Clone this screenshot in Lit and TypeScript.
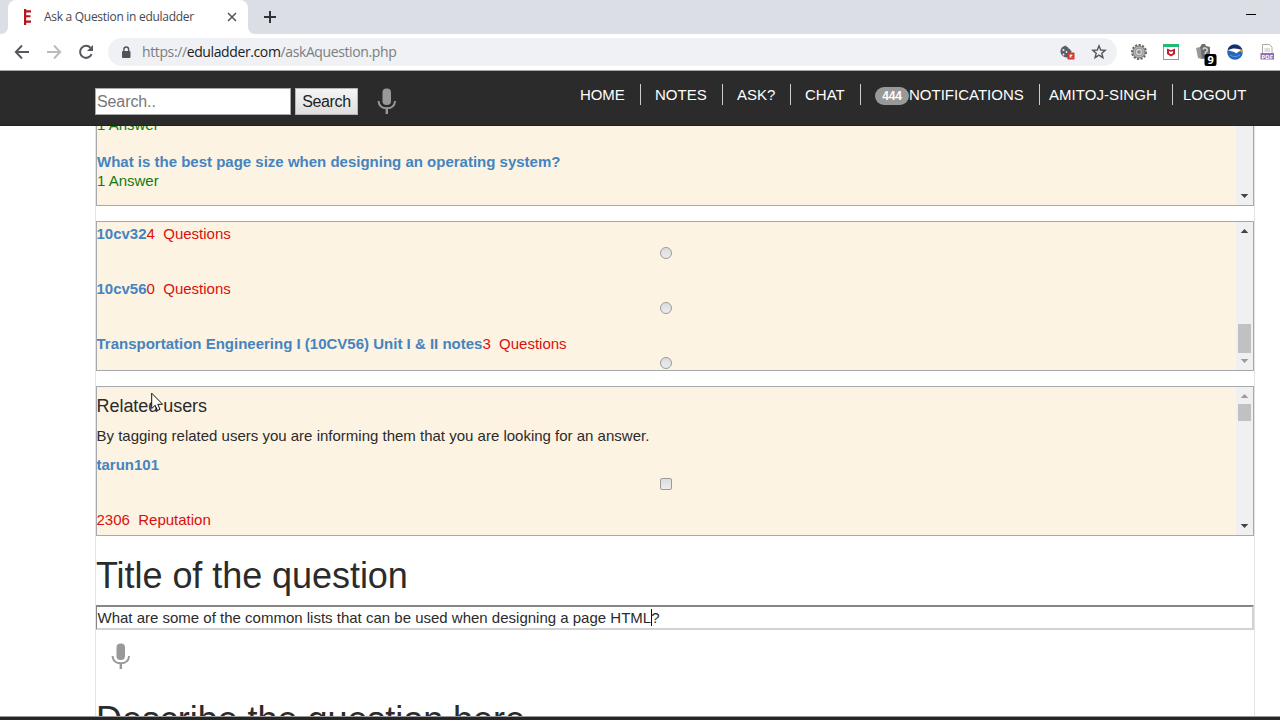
import { LitElement, html, css } from "lit";
import { customElement, property } from "lit/decorators.js";

@customElement("mic-icon")
class MicIcon extends LitElement {
  static styles = css`
    :host { display: block; width: 20px; height: 27px; }
    svg { display: block; }
  `;
  render() {
    return html`<svg width="20" height="27" viewBox="0 0 20 27" fill="none">
      <rect x="5.5" y="0.5" width="8.5" height="16.5" rx="4" fill="#999" />
      <path d="M1.5 13C2 17.8 5 20.3 9.8 20.3S17.6 17.8 18.1 13" stroke="#999" stroke-width="2" />
      <path d="M9.8 20V26" stroke="#999" stroke-width="2.4" />
    </svg>`;
  }
}

@customElement("scroll-panel")
class ScrollPanel extends LitElement {
  @property() thumb = "none";
  static styles = css`
    :host { display: flex; box-sizing: border-box; height: 150px; border: 1px solid #a5a9ac; background: #fdf3e2; overflow: hidden; flex: none; }
    .body { flex: 1; min-width: 0; overflow: hidden; display: flex; flex-direction: column; }
    .bar { width: 17px; background: #f0f0f1; display: flex; flex-direction: column; align-items: center; }
    .arrow { height: 17px; width: 17px; flex: none; fill: #444; }
    .dim { fill: #9b9b9b; }
    .track { flex: 1; display: flex; flex-direction: column; width: 13px; }
    .thumb { width: 13px; background: #c1c1c1; }
    .top { height: 17px; margin-top: 0; }
    .bottom { height: 29px; margin-top: auto; }
    .none { display: none; }
  `;
  render() {
    return html`
      <div class="body"><slot></slot></div>
      <div class="bar">
        <svg class="arrow ${this.thumb === "top" ? "dim" : ""}" viewBox="0 0 17 17"><path d="M4.7 11L8.5 7L12.3 11Z" /></svg>
        <div class="track"><div class="thumb ${this.thumb}"></div></div>
        <svg class="arrow ${this.thumb === "bottom" ? "dim" : ""}" viewBox="0 0 17 17"><path d="M4.7 6L8.5 10L12.3 6Z" /></svg>
      </div>`;
  }
}

@customElement("browser-chrome")
class BrowserChrome extends LitElement {
  static styles = css`
    :host { display: block; height: 71px; flex: none; font-family: "Open Sans", "Noto Sans", sans-serif; }
    svg { display: block; flex: none; }
    .tabs { height: 34px; background: #dcdee6; display: flex; align-items: stretch; }
    .lead { width: 8px; background: #fff; }
    .lead i { display: block; height: 34px; background: #dcdee6; border-bottom-right-radius: 7px; }
    .tab { width: 240px; box-sizing: border-box; background: #fff; border-radius: 8px 8px 0 0; display: flex; align-items: center; padding-left: 15px; }
    .fav { margin-right: 11px; }
    .title { width: 183px; font-size: 12px; color: #45484c; white-space: nowrap; letter-spacing: -.29px; }
    .after { flex: 1; background: #fff; }
    .after div { height: 34px; background: #dcdee6; border-bottom-left-radius: 7px; display: flex; align-items: center; padding: 0 24px 0 15px; justify-content: space-between; box-sizing: border-box; }
    .min { width: 10px; height: 1px; background: #000; margin-bottom: 5px; }
    .tools { height: 36px; background: #fff; display: flex; align-items: center; padding-left: 14px; border-bottom: 1px solid #a3a7a7; overflow: hidden; }
    .nav { display: flex; gap: 16px; margin-right: 14px; flex: none; }
    .omni { width: 1009px; flex: none; height: 28px; box-sizing: border-box; border-radius: 14px; background: #eff1f4; display: flex; align-items: center; padding: 0 10px 0 13px; }
    .url { flex: 1; margin-left: 11px; font-size: 14px; color: #7b7e82; white-space: nowrap; letter-spacing: -.385px; }
    .url b { font-weight: 400; color: #202124; }
    .marks { display: flex; gap: 16px; }
    .ext { display: flex; flex: none; align-items: flex-start; height: 16px; gap: 16px; margin-left: 14px; }
    .ext .counter { margin-right: -6px; }
    .num { font: 700 11px "Open Sans", sans-serif; }
    .pdf { font: 700 6px "Open Sans", sans-serif; }
  `;
  render() {
    return html`
      <div class="tabs">
        <div class="lead"><i></i></div>
        <div class="tab">
          <svg class="fav" width="10" height="16" viewBox="0 0 10 16"><path d="M1 0H3.2V1.2H8V3.4H3.2V6.2H7.5V8.3H3.2V11.4H8V13.8H3.2V16H1Z" fill="#b8141a" /></svg>
          <span class="title">Ask a Question in eduladder</span>
          <svg width="10" height="10" viewBox="0 0 10 10"><path d="M1 1L9 9M9 1L1 9" stroke="#505357" stroke-width="1.5" /></svg>
        </div>
        <div class="after"><div>
          <svg width="14" height="14" viewBox="0 0 14 14"><path d="M7 1V13M1 7H13" stroke="#303338" stroke-width="2" /></svg>
          <span class="min"></span>
        </div></div>
      </div>
      <div class="tools">
        <div class="nav">
          <svg width="16" height="16" viewBox="0 0 16 16" fill="none" stroke="#54575b" stroke-width="1.9"><path d="M15 8H2.5M8 1.5L1.8 8L8 14.5" /></svg>
          <svg width="16" height="16" viewBox="0 0 16 16" fill="none" stroke="#b9bbbe" stroke-width="1.9"><path d="M1 8H13.5M8 1.5L14.2 8L8 14.5" /></svg>
          <svg width="16" height="16" viewBox="0 0 16 16"><path d="M13.6 10.2A6 6 0 1 1 12.5 3.8" fill="none" stroke="#54575b" stroke-width="2" /><path d="M15 1V7H9Z" fill="#54575b" /></svg>
        </div>
        <div class="omni">
          <svg width="10" height="13" viewBox="0 0 10 13"><rect x="1" y="5" width="8.5" height="7" rx="1" fill="#505357" /><path d="M2.9 5V3.3A2.3 2.3 0 0 1 7.6 3.3V5" fill="none" stroke="#505357" stroke-width="1.4" /></svg>
          <span class="url">https://<b>eduladder.com</b>/askAquestion.php</span>
          <div class="marks">
            <svg width="16" height="16" viewBox="0 0 16 16"><path d="M7 1.5A6 6 0 1 0 8 13.5H12V8L13.2 7A2 2 0 0 1 11 5A2 2 0 0 1 9 3.2A2 2 0 0 1 7 1.5Z" fill="#5b5e64" /><circle cx="4.5" cy="6" r="1.1" fill="#eff1f4" /><circle cx="7.5" cy="8" r=".9" fill="#eff1f4" /><circle cx="4.5" cy="10.5" r="1" fill="#eff1f4" /><rect x="8.5" y="8.5" width="7" height="7" rx=".8" fill="#d3372f" /><path d="M10.7 10.7L13.3 13.3M13.3 10.7L10.7 13.3" stroke="#fff" stroke-width="1.2" /></svg>
            <svg width="16" height="16" viewBox="0 0 16 16"><path d="M8 1.8L9.7 6L14.2 6.3L10.8 9.2L11.9 13.7L8 11.2L4.1 13.7L5.2 9.2L1.8 6.3L6.3 6Z" fill="none" stroke="#54575b" stroke-width="1.4" /></svg>
          </div>
        </div>
        <div class="ext">
          <svg width="16" height="16" viewBox="0 0 16 16"><circle cx="8" cy="8" r="7" fill="none" stroke="#666" stroke-width="2" stroke-dasharray="2.2 1.4" /><circle cx="8" cy="8" r="6" fill="#b5b5b5" stroke="#777" /><circle cx="8" cy="8" r="3.8" fill="#d5d5d5" stroke="#888" stroke-width=".8" /><circle cx="8" cy="8" r="1.8" fill="#858585" /></svg>
          <svg width="16" height="16" viewBox="0 0 16 16"><rect x=".5" y=".5" width="15" height="15" fill="#fff" stroke="#999" /><rect width="16" height="3" fill="#1fbd73" /><path d="M4 4.5L8 6.3L12 4.5V10L8 12.5L4 10Z" fill="#c01f2e" /><path d="M6 7V9L8 10.2L10 9V7L8 8Z" fill="#fff" /></svg>
          <svg class="counter" width="22" height="22" viewBox="0 0 22 22"><path d="M5 3L7 0H10L11 2L15 3V14L6 15Z" fill="#6e6e6e" /><path d="M1 4L5 3L7 15L3 14Z" fill="#999" /><path d="M8 5.5A2.2 2.2 0 1 1 10.5 8.3V11" fill="none" stroke="#d0d0d0" stroke-width="1.6" /><rect x="9.5" y="10" width="12" height="12" rx="2" fill="#000" /><text class="num" x="12.4" y="20.1" fill="#fff">9</text></svg>
          <svg width="16" height="16" viewBox="0 0 16 16"><circle cx="8" cy="8" r="7.8" fill="#2766bd" /><path d="M.8 5C4 -1 11 -.5 15 5L9 6Z" fill="#14305f" /><path d="M1 6.5C5 3.5 11 4 15.5 6.5C12 7 10.5 8 9.5 9.5C8 8 5 7 1 6.5Z" fill="#fff" /><path d="M12 5L16 6.5L15 9L13.5 7.2Z" fill="#e8a52a" /><path d="M3 11C6 13 10 13 13 11" fill="none" stroke="#5ba0e5" /></svg>
          <svg width="16" height="16" viewBox="0 0 16 16"><path d="M3.5 10V.5H10.5L13 3.2V10" fill="#fff" stroke="#aaa" /><path d="M5.5 5H11M5.5 7H11" stroke="#bbb" /><rect x="1.5" y="9" width="13.5" height="6.5" fill="#9a6bb8" /><text class="pdf" x="2.6" y="14.5" fill="#fff">PDF</text></svg>
        </div>
      </div>`;
  }
}

@customElement("app-root")
class AppRoot extends LitElement {
  static styles = css`
    :host { display: flex; flex-direction: column; position: relative; width: 1280px; height: 720px; overflow: hidden; background: #fff; color: #2b2b2b; font: 15px/20px "Liberation Sans", Arial, sans-serif; }
    .header { height: 55px; flex: none; box-sizing: border-box; background: #2b2b2b; display: flex; align-items: flex-start; padding-left: 95px; border-bottom: 1px solid #222; }
    .search { margin-top: 17px; box-sizing: border-box; width: 196px; height: 27px; border: 1px solid #a8a8a8; background: #fff; color: #777; font-size: 16px; line-height: 26px; padding-left: 1px; letter-spacing: -.5px; }
    .button { margin: 17px 19px 0 4px; box-sizing: border-box; width: 63px; height: 27px; border: 1px solid #b5b5b5; background: linear-gradient(#f5f5f5, #dedede); font-size: 16px; line-height: 26px; text-align: center; color: #222; letter-spacing: -.5px; }
    .search, .button { letter-spacing: -.5px; }
    .button { letter-spacing: -.5px; }
    mic-icon.head { margin-top: 17px; }
    .menu { margin: 13px 0 0 183px; display: grid; grid-template-columns: 61px 82px 68px 70px 179px 133px 90px; color: #fff; white-space: nowrap; }
    .search { letter-spacing: -.1px; }
    .button { letter-spacing: -.4px; }
    .item { height: 21px; line-height: 21px; border-right: 1px solid #ccc; padding-left: 14px; display: flex; align-items: center; }
    .item.first { padding-left: 0; letter-spacing: -.1px; }
    .item.near { padding-left: 9px; letter-spacing: .05px; }
    .item.last { border: 0; padding-left: 10px; }
    .badge { width: 34px; height: 18px; border-radius: 9px; background: #999; font: 700 12px/18px "Liberation Sans", sans-serif; text-align: center; margin-top: 3px; letter-spacing: -.1px; }
    .page { flex: 1; min-height: 0; overflow: hidden; width: 1158px; margin-left: 95px; border: 1px solid #e3e3e3; border-width: 0 1px; display: flex; flex-direction: column; }
    .page scroll-panel { margin-bottom: 15px; }
    .page scroll-panel.first { margin-top: -70px; }
    .link { color: #4484c0; font-weight: 700; white-space: pre; }
    .red { color: #d8100f; white-space: pre; }
    .green { color: #117a11; }
    .qa { height: 39px; line-height: 20px; display: flex; flex-direction: column; margin-bottom: 17px; }
    .qa .green { margin-top: -1px; }
    .qa.up { margin-top: 39px; }
    .row { height: 55px; flex: none; display: flex; flex-direction: column; }
    .row.start { margin-top: 2px; }
    .row, .red, .note, .subhead { text-indent: -.5px; }
    .radio, .check { box-sizing: border-box; width: 12px; height: 12px; border: 1px solid #9b9b9b; background: linear-gradient(#dcdcdc, #ececec); margin: 3px 0 0 563px; border-radius: 50%; }
    .check { border-radius: 2px; }
    .subhead { font-size: 18px; margin: 9px 0 10px; letter-spacing: -.04px; }
    .note { margin-bottom: 9px; white-space: nowrap; }
    h1 { margin: 0; font: 400 36px/40px "Liberation Sans", Arial, sans-serif; white-space: nowrap; flex: none; letter-spacing: -.05px; }
    .title { margin-top: 5px; }
    .field { flex: none; height: 25px; box-sizing: border-box; border: 2px solid; border-color: #858585 #d2d2d2 #d2d2d2 #858585; border-left-width: 1px; line-height: 21px; display: flex; align-items: center; margin-top: 9px; padding-left: .5px; white-space: nowrap; }
    .caret { width: 1px; height: 17px; background: #111; margin: 0 -1px 0 0; }
    mic-icon.voice { margin: 13px 0 0 15px; flex: none; }
    .describe { margin-top: 30px; }
    .bottom { height: 3px; flex: none; background: #262626; border-top: 1px solid #999; }
    .cursor { position: absolute; left: 151px; top: 392px; }
  `;
  render() {
    const subject = (name: string, n: number, start = false) => html`
      <div class="row ${start ? "start" : ""}"><div><span class="link">${name}</span><span class="red">${n}  Questions</span></div><div class="radio"></div></div>`;
    return html`
      <browser-chrome></browser-chrome>
      <div class="header">
        <div class="search">Search..</div>
        <div class="button">Search</div>
        <mic-icon class="head"></mic-icon>
        <div class="menu">
          <div class="item first">HOME</div><div class="item">NOTES</div><div class="item">ASK?</div><div class="item">CHAT</div>
          <div class="item"><span class="badge">444</span>NOTIFICATIONS</div>
          <div class="item near">AMITOJ-SINGH</div><div class="item last">LOGOUT</div>
        </div>
      </div>
      <div class="page">
        <scroll-panel class="first">
          <div class="qa up"><span class="link">&nbsp;</span><span class="green">1 Answer</span></div>
          <div class="qa"><span class="link">What is the best page size when designing an operating system?</span><span class="green">1 Answer</span></div>
        </scroll-panel>
        <scroll-panel thumb="bottom">
          ${subject("10cv32", 4, true)}${subject("10cv56", 0)}${subject("Transportation Engineering I (10CV56) Unit I & II notes", 3)}
        </scroll-panel>
        <scroll-panel thumb="top">
          <div class="subhead">Related users</div>
          <div class="note">By tagging related users you are informing them that you are looking for an answer.</div>
          <div class="row"><span class="link">tarun101</span><div class="check"></div></div>
          <div class="red">2306  Reputation</div>
        </scroll-panel>
        <h1 class="title">Title of the question</h1>
        <div class="field"><span>What are some of the common lists that can be used when designing a page HTML</span><i class="caret"></i><span>?</span></div>
        <mic-icon class="voice"></mic-icon>
        <h1 class="describe">Describe the question here</h1>
      </div>
      <div class="bottom"></div>
      <svg class="cursor" width="13" height="20" viewBox="0 0 13 20"><path d="M.7 1.2V16.5L4.2 13.3L6.5 18.5L9 17.4L6.8 12.3H11.6Z" fill="#fff" stroke="#111" /></svg>`;
  }
}
